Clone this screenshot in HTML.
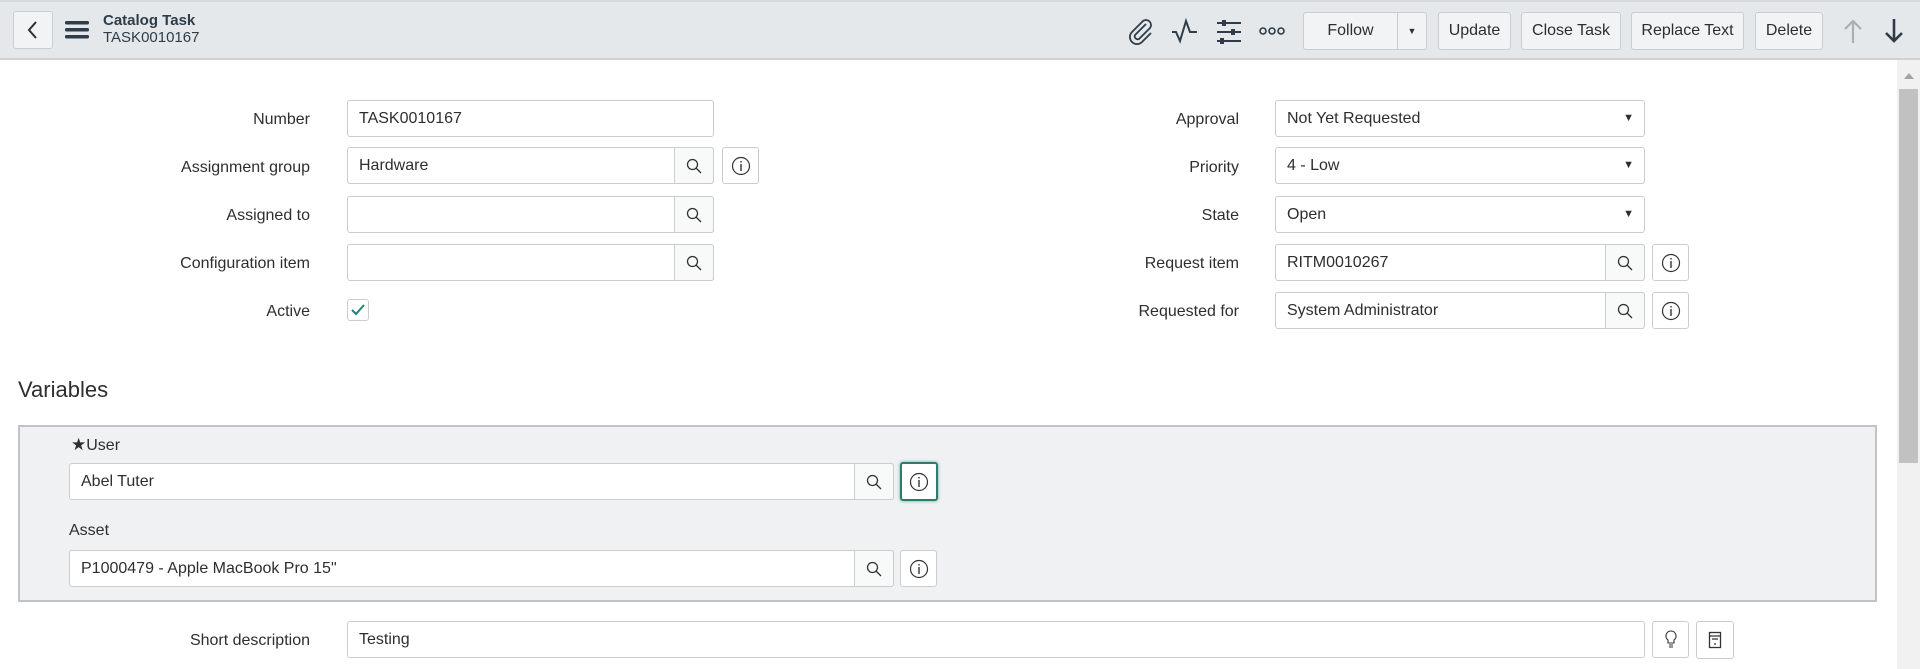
<!DOCTYPE html>
<html><head><meta charset="utf-8"><style>
*{box-sizing:border-box;margin:0;padding:0}
body{width:1920px;height:669px;overflow:hidden;background:#fff;font-family:"Liberation Sans",sans-serif;color:#2e2e2e;position:relative;font-size:16px}
.a{position:absolute}
.hdr{left:0;top:0;width:1920px;height:60px;background:#e4e8eb;border-top:2px solid #d8dbde;border-bottom:2px solid #cfd3d6}
.btn{position:absolute;background:#f2f3f5;border:1px solid #c9cdd0;border-radius:3px;font-size:16px;color:#2e2e2e;display:flex;align-items:center;justify-content:center}
.lbl{position:absolute;text-align:right;font-size:16px;color:#2e2e2e;line-height:20px;margin-top:2px}
.inp{position:absolute;background:#fff;border:1px solid #c9cdd0;border-radius:3px;height:37px;padding-left:11px;line-height:35px;font-size:16px}
.srch{position:absolute;top:-1px;right:-1px;width:40px;height:37px;border:1px solid #c9cdd0;border-radius:0 3px 3px 0;background:#f8f9f9;display:flex;align-items:center;justify-content:center}
.ib{position:absolute;width:37px;height:37px;border:1px solid #c9cdd0;border-radius:3px;background:#fff;display:flex;align-items:center;justify-content:center}
.sel::after{content:"▼";position:absolute;right:10px;top:0;font-size:11px}
</style></head><body>
<div class="a hdr"></div>
<div class="btn" style="left:13px;top:11px;width:40px;height:38px"><svg width="14" height="20" viewBox="0 0 14 20"><path d="M10 2L3 10l7 8" fill="none" stroke="#2e2e2e" stroke-width="2"/></svg></div>
<svg class="a" style="left:65px;top:20px" width="24" height="20"><rect y="1" width="24" height="3.5" rx="1.5" fill="#2e3d49"/><rect y="8" width="24" height="3.5" rx="1.5" fill="#2e3d49"/><rect y="15" width="24" height="3.5" rx="1.5" fill="#2e3d49"/></svg>
<div class="a" style="left:103px;top:12px;font-size:15px;font-weight:bold;color:#2e3d49">Catalog Task</div>
<div class="a" style="left:103px;top:29px;font-size:15px;color:#2e3d49">TASK0010167</div>
<svg class="a" style="left:1127px;top:18px" width="28" height="28" viewBox="0 0 28 28"><path d="M19 6L8 17a3 3 0 0 0 4 4l11-11a5 5 0 0 0-7-7L5 14a7 7 0 0 0 10 10l9-9" fill="none" stroke="#2e3d49" stroke-width="1.8"/></svg>
<svg class="a" style="left:1171px;top:18px" width="27" height="26"><path d="M1 14h4l4 9 6-20 4 11h7" fill="none" stroke="#2e3d49" stroke-width="2"/></svg>
<svg class="a" style="left:1216px;top:18px" width="26" height="28"><path d="M1 5h24M1 14h24M1 23h24" stroke="#2e3d49" stroke-width="2"/><rect x="6" y="2" width="4" height="6" fill="#2e3d49"/><rect x="15" y="11" width="4" height="6" fill="#2e3d49"/><rect x="4" y="20" width="4" height="6" fill="#2e3d49"/></svg>
<svg class="a" style="left:1259px;top:26px" width="26" height="10"><circle cx="4" cy="5" r="3" fill="none" stroke="#2e3d49" stroke-width="1.6"/><circle cx="13" cy="5" r="3" fill="none" stroke="#2e3d49" stroke-width="1.6"/><circle cx="22" cy="5" r="3" fill="none" stroke="#2e3d49" stroke-width="1.6"/></svg>
<div class="btn" style="left:1303px;top:12px;width:95px;height:38px;border-radius:3px 0 0 3px">Follow</div>
<div class="btn" style="left:1397px;top:12px;width:30px;height:38px;border-radius:0 3px 3px 0;font-size:9px">▼</div>
<div class="btn" style="left:1438px;top:12px;width:73px;height:38px">Update</div>
<div class="btn" style="left:1521px;top:12px;width:100px;height:38px">Close Task</div>
<div class="btn" style="left:1631px;top:12px;width:113px;height:38px">Replace Text</div>
<div class="btn" style="left:1755px;top:12px;width:68px;height:38px">Delete</div>
<svg class="a" style="left:1843px;top:18px" width="20" height="26"><path d="M10 25V3M2 11l8-8 8 8" fill="none" stroke="#a9afb3" stroke-width="2.2"/></svg>
<svg class="a" style="left:1884px;top:18px" width="20" height="26"><path d="M10 1v22M2 15l8 8 8-8" fill="none" stroke="#2e3d49" stroke-width="2.6"/></svg>
<div class="a" style="left:1897px;top:60px;width:23px;height:609px;background:#f1f1f1"></div>
<div class="a" style="left:1904px;top:73px;width:0;height:0;border-left:5px solid transparent;border-right:5px solid transparent;border-bottom:6px solid #a3a3a3"></div>
<div class="a" style="left:1899px;top:89px;width:19px;height:374px;background:#c1c1c1"></div>

<div class="lbl" style="right:1610px;top:108px">Number</div>
<div class="inp" style="left:347px;top:100px;width:367px">TASK0010167</div>
<div class="lbl" style="right:1610px;top:156px">Assignment group</div>
<div class="inp" style="left:347px;top:147px;width:367px">Hardware<div class="srch"><svg width="16" height="16"><circle cx="6.5" cy="6.5" r="5" fill="none" stroke="#333" stroke-width="1.3"/><path d="M10 10l5 5" stroke="#333" stroke-width="1.3"/></svg></div></div>
<div class="ib" style="left:722px;top:147px"><svg width="20" height="20"><circle cx="10" cy="10" r="8.5" fill="none" stroke="#333" stroke-width="1.2"/><path d="M10 8v7M10 5v1.5" stroke="#333" stroke-width="1.4"/></svg></div>
<div class="lbl" style="right:1610px;top:204px">Assigned to</div>
<div class="inp" style="left:347px;top:196px;width:367px"><div class="srch"><svg width="16" height="16"><circle cx="6.5" cy="6.5" r="5" fill="none" stroke="#333" stroke-width="1.3"/><path d="M10 10l5 5" stroke="#333" stroke-width="1.3"/></svg></div></div>
<div class="lbl" style="right:1610px;top:252px">Configuration item</div>
<div class="inp" style="left:347px;top:244px;width:367px"><div class="srch"><svg width="16" height="16"><circle cx="6.5" cy="6.5" r="5" fill="none" stroke="#333" stroke-width="1.3"/><path d="M10 10l5 5" stroke="#333" stroke-width="1.3"/></svg></div></div>
<div class="lbl" style="right:1610px;top:300px">Active</div>
<div class="a" style="left:347px;top:299px;width:22px;height:22px;border:1px solid #c9cdd0;border-radius:3px;background:#fff"><svg width="20" height="20"><path d="M4 10l4 4 8-9" fill="none" stroke="#1f8476" stroke-width="2"/></svg></div>

<div class="lbl" style="right:681px;top:108px">Approval</div>
<div class="inp sel" style="left:1275px;top:100px;width:370px">Not Yet Requested</div>
<div class="lbl" style="right:681px;top:156px">Priority</div>
<div class="inp sel" style="left:1275px;top:147px;width:370px">4 - Low</div>
<div class="lbl" style="right:681px;top:204px">State</div>
<div class="inp sel" style="left:1275px;top:196px;width:370px">Open</div>
<div class="lbl" style="right:681px;top:252px">Request item</div>
<div class="inp" style="left:1275px;top:244px;width:370px">RITM0010267<div class="srch"><svg width="16" height="16"><circle cx="6.5" cy="6.5" r="5" fill="none" stroke="#333" stroke-width="1.3"/><path d="M10 10l5 5" stroke="#333" stroke-width="1.3"/></svg></div></div>
<div class="ib" style="left:1652px;top:244px"><svg width="20" height="20"><circle cx="10" cy="10" r="8.5" fill="none" stroke="#333" stroke-width="1.2"/><path d="M10 8v7M10 5v1.5" stroke="#333" stroke-width="1.4"/></svg></div>
<div class="lbl" style="right:681px;top:300px">Requested for</div>
<div class="inp" style="left:1275px;top:292px;width:370px">System Administrator<div class="srch"><svg width="16" height="16"><circle cx="6.5" cy="6.5" r="5" fill="none" stroke="#333" stroke-width="1.3"/><path d="M10 10l5 5" stroke="#333" stroke-width="1.3"/></svg></div></div>
<div class="ib" style="left:1652px;top:292px"><svg width="20" height="20"><circle cx="10" cy="10" r="8.5" fill="none" stroke="#333" stroke-width="1.2"/><path d="M10 8v7M10 5v1.5" stroke="#333" stroke-width="1.4"/></svg></div>

<div class="a" style="left:18px;top:377px;font-size:22px;color:#2e2e2e">Variables</div>
<div class="a" style="left:18px;top:425px;width:1859px;height:177px;background:#f0f1f3;border:2px solid #c0c4c6"></div>
<div class="a" style="left:71px;top:435px;font-size:16px"><span style="font-size:17px">★</span>User</div>
<div class="inp" style="left:69px;top:463px;width:825px">Abel Tuter<div class="srch"><svg width="16" height="16"><circle cx="6.5" cy="6.5" r="5" fill="none" stroke="#333" stroke-width="1.3"/><path d="M10 10l5 5" stroke="#333" stroke-width="1.3"/></svg></div></div>
<div class="ib" style="left:900px;top:462px;width:38px;height:39px;border:2px solid #2d7c70;box-shadow:0 0 3px #5fa89b"><svg width="20" height="20"><circle cx="10" cy="10" r="8.5" fill="none" stroke="#333" stroke-width="1.2"/><path d="M10 8v7M10 5v1.5" stroke="#333" stroke-width="1.4"/></svg></div>
<div class="a" style="left:69px;top:522px;font-size:16px">Asset</div>
<div class="inp" style="left:69px;top:550px;width:825px">P1000479 - Apple MacBook Pro 15"<div class="srch"><svg width="16" height="16"><circle cx="6.5" cy="6.5" r="5" fill="none" stroke="#333" stroke-width="1.3"/><path d="M10 10l5 5" stroke="#333" stroke-width="1.3"/></svg></div></div>
<div class="ib" style="left:900px;top:550px"><svg width="20" height="20"><circle cx="10" cy="10" r="8.5" fill="none" stroke="#333" stroke-width="1.2"/><path d="M10 8v7M10 5v1.5" stroke="#333" stroke-width="1.4"/></svg></div>

<div class="lbl" style="right:1610px;top:629px">Short description</div>
<div class="inp" style="left:347px;top:621px;width:1298px">Testing</div>
<div class="ib" style="left:1652px;top:621px"><svg width="14" height="20"><path d="M7 1a5 5 0 0 0-3 9v3h6v-3a5 5 0 0 0-3-9zM5 15h4M5 17h4" fill="none" stroke="#333" stroke-width="1.1"/></svg></div>
<div class="ib" style="left:1696px;top:621px;width:38px;height:38px"><svg width="14" height="18"><rect x="1.5" y="1.5" width="11" height="15" fill="none" stroke="#333" stroke-width="1.3"/><path d="M1.5 5h11M4 8h6M7 12v2" stroke="#333" stroke-width="1.3"/></svg></div>
</body></html>
